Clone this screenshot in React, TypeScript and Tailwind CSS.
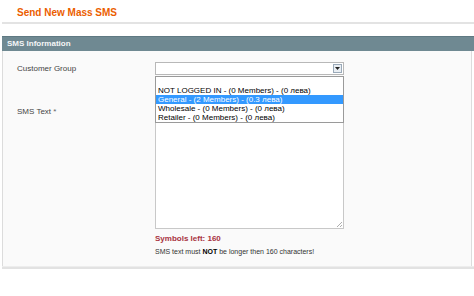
import React from "react";

const options = [
  "",
  "NOT LOGGED IN - (0 Members) - (0 лева)",
  "General - (2 Members) - (0.3 лева)",
  "Wholesale - (0 Members) - (0 лева)",
  "Retailer - (0 Members) - (0 лева)",
];

export default function App() {
  return (
    <div className="w-[474px] h-[296px] bg-white overflow-hidden font-['Liberation_Sans',Arial,sans-serif]">
      <div className="pt-[7px] pl-[17px] text-[10px] leading-[12px] font-bold text-[#eb5e00]">
        Send New Mass SMS
      </div>
      <div className="mt-[3px] ml-[2px] h-[2px] bg-[#e3e3e3]" />

      <div className="mt-[12px] ml-[2px]">
        <div className="w-[472px] h-[15px] bg-[#6f8992] border-t border-[#5f7982] pl-[5px] text-[8px] leading-[14px] font-bold text-[#f4f6f7]">
          SMS Information
        </div>
        <div className="w-[470px] h-[215px] bg-[#fafafa] border-x border-[#dcdcdc] pt-[11px]">
          {/* customer group */}
          <div className="flex">
            <div className="w-[152px] pl-[14px] text-[8px] leading-[13px] text-[#444]">Customer Group</div>
            <div className="relative w-[189px] h-[13px] bg-white border border-[#b8b8b8]">
              <div className="absolute right-[1px] top-[1px] w-[9px] h-[9px] bg-[#e9eef3] border border-[#9aa9b8] flex items-center justify-center">
                <svg width="5" height="3" viewBox="0 0 5 3">
                  <path d="M0 0h5L2.5 3z" fill="#222" />
                </svg>
              </div>
              <div className="absolute left-[-1px] top-[13px] z-10 w-[189px] bg-white border border-[#9a9a9a]">
                {options.map((o, i) => (
                  <div
                    key={i}
                    className={`h-[9px] pl-[2px] text-[8px] leading-[9px] whitespace-nowrap ${
                      i === 2 ? "bg-[#3399ff] text-white" : "text-black"
                    }`}
                  >
                    {o}
                  </div>
                ))}
              </div>
            </div>
          </div>

          {/* sms text */}
          <div className="flex mt-[30px]">
            <div className="w-[152px] pl-[14px] text-[8px] leading-[13px] text-[#444]">
              SMS Text <span className="text-[#666]">*</span>
            </div>
            <div>
              <div className="relative w-[189px] h-[124px] bg-white border border-[#c8c8c8]">
                <svg className="absolute right-[1px] bottom-[1px]" width="6" height="6" viewBox="0 0 6 6">
                  <path d="M6 1L1 6M6 4L4 6" stroke="#999" strokeWidth="0.8" />
                </svg>
              </div>
              <div className="mt-[5px] text-[8px] leading-[10px] font-bold text-[#a8323e]">Symbols left: 160</div>
              <div className="mt-[3px] text-[7px] leading-[10px] text-[#333]">
                SMS text must <b className="text-black">NOT</b> be longer then 160 characters!
              </div>
            </div>
          </div>
        </div>
        <div className="w-[472px] h-[3px] border-t border-[#ededed] bg-[#e2e2e2]" />
      </div>
    </div>
  );
}
